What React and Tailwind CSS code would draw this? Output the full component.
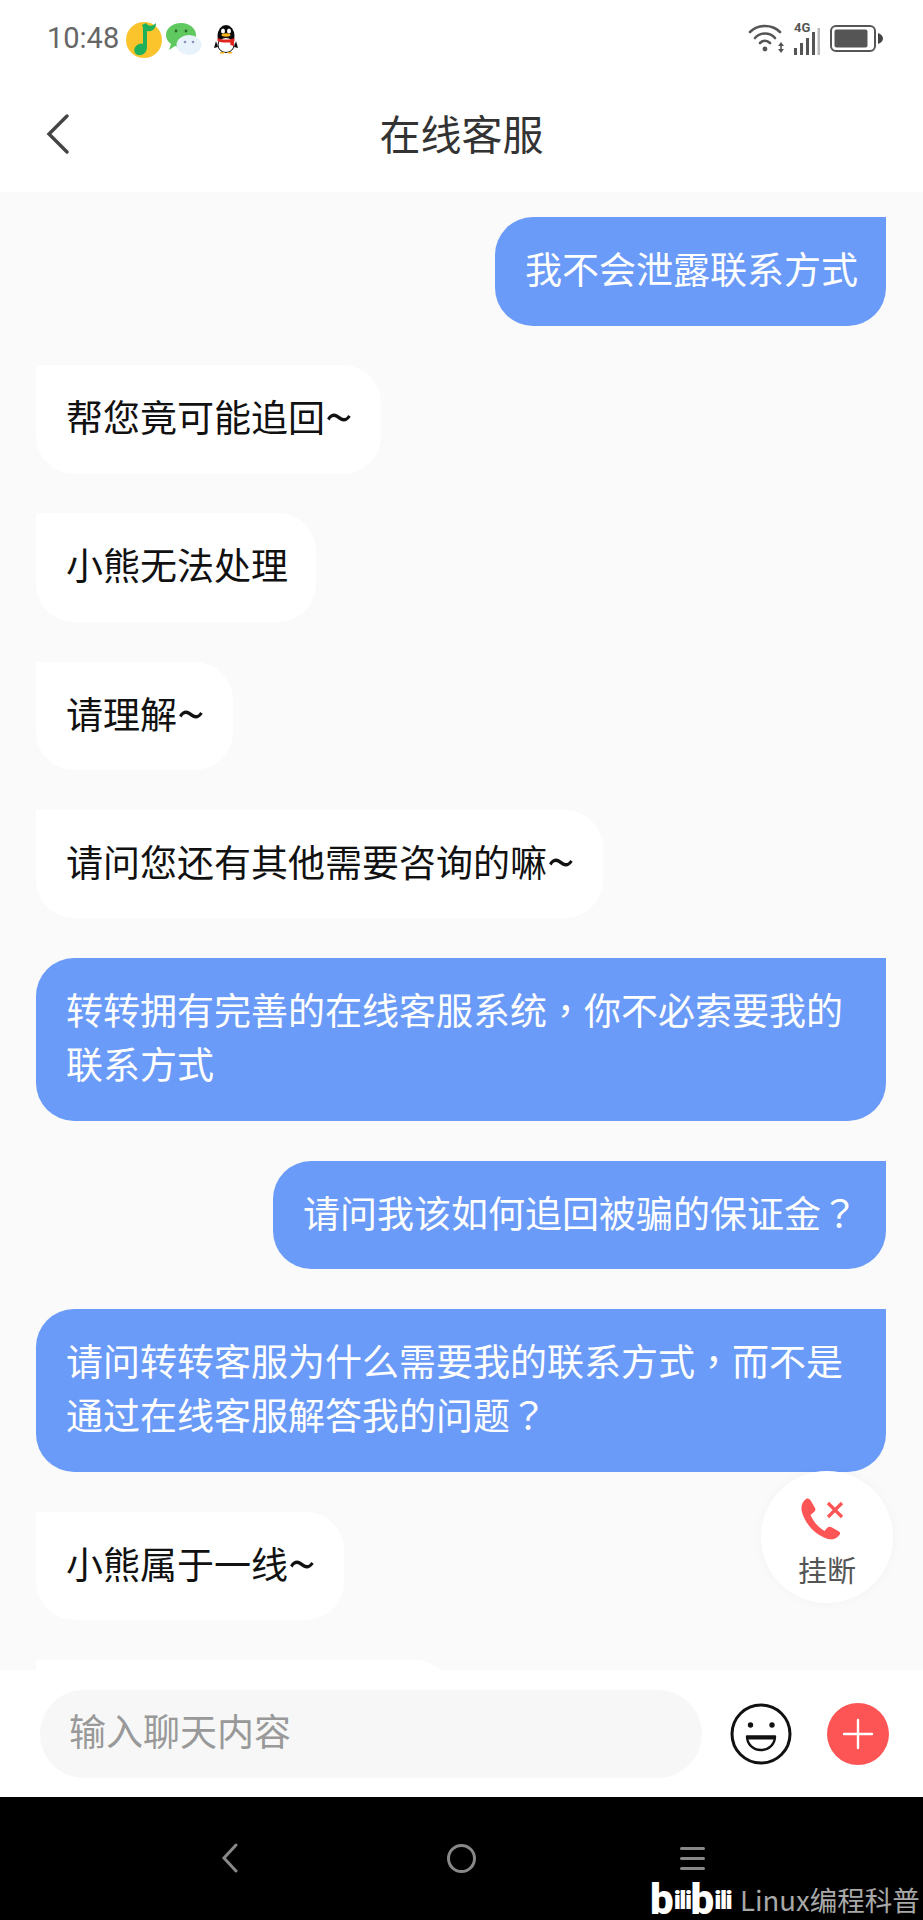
import React from 'react';

const messages = [
    { id: 1, text: '我不会泄露联系方式', mine: true },
    { id: 2, text: '帮您竟可能追回~' },
    { id: 3, text: '小熊无法处理' },
    { id: 4, text: '请理解~' },
    { id: 5, text: '请问您还有其他需要咨询的嘛~' },
    { id: 6, text: '转转拥有完善的在线客服系统，你不必索要我的联系方式', mine: true },
    { id: 7, text: '请问我该如何追回被骗的保证金？', mine: true },
    { id: 8, text: '请问转转客服为什么需要我的联系方式，而不是通过在线客服解答我的问题？', mine: true },
    { id: 9, text: '小熊属于一线~' },
];

const QQMusicIcon = () => (
    <svg width="38" height="38" viewBox="0 0 38 38">
        <circle cx="19" cy="20" r="18" fill="#fbc42c" />
        <path d="M17 5 L21 3 C23 6 27 7 31 3 C31 9 27 12 22 11 L22 27 C22 33 17 36 13 35 C9 34 8 29 11 26 C13 24 16 23 18 24 L18 8 Z" fill="#1eb05a" />
    </svg>
);

const WeChatIcon = () => (
    <svg width="38" height="34" viewBox="0 0 38 34">
        <path d="M16 1 C25 1 31 7 31 13 C31 20 25 25 16 25 C14 25 12 25 10 24 L4 28 L6 22 C3 20 1 17 1 13 C1 7 7 1 16 1 Z" fill="#5fc85f" />
        <circle cx="11" cy="9" r="1.4" fill="#2a6b2a" />
        <circle cx="21" cy="9" r="1.4" fill="#2a6b2a" />
        <ellipse cx="24" cy="23" rx="12.5" ry="10" fill="#e8f2fa" />
        <circle cx="20" cy="20" r="1.3" fill="#8a8fc0" />
        <circle cx="28" cy="20" r="1.3" fill="#8a8fc0" />
    </svg>
);

const QQIcon = () => (
    <svg width="26" height="30" viewBox="0 0 26 30">
        <ellipse cx="13" cy="12" rx="8.5" ry="11" fill="#0a0a0a" />
        <path d="M3 17 L1 24 L5 23 Z M23 17 L25 24 L21 23 Z" fill="#0a0a0a" />
        <ellipse cx="13" cy="21" rx="8" ry="7.5" fill="#fff" stroke="#0a0a0a" strokeWidth="1" />
        <ellipse cx="10" cy="7" rx="2" ry="2.5" fill="#fff" />
        <ellipse cx="16" cy="7" rx="2" ry="2.5" fill="#fff" />
        <ellipse cx="13" cy="11" rx="4.5" ry="1.7" fill="#f5b21c" />
        <path d="M4.5 14 C9 16 17 16 21.5 14 L21.5 17 C17 19 9 19 4.5 17 Z M17 17 L21 17 L21 22 L17.5 21 Z" fill="#e0251f" />
        <path d="M7 28 L12 28 L11 29.5 L7 29.5 Z M14 28 L19 28 L19 29.5 L15 29.5 Z" fill="#f5b21c" />
    </svg>
);

const StatusRight = () => (
    <svg width="136" height="36" viewBox="0 0 136 36" fill="none" className="block">
        {/* wifi */}
        <path d="M2 11 C10 3 24 3 32 11" stroke="#555" strokeWidth="2.6" strokeLinecap="round" />
        <path d="M7 17 C12 11 22 11 27 17" stroke="#555" strokeWidth="2.6" strokeLinecap="round" />
        <path d="M12 22 C15 19 19 19 22 22" stroke="#555" strokeWidth="2.6" strokeLinecap="round" />
        <circle cx="17" cy="28" r="2.4" fill="#555" />
        <path d="M30 25 L33 21 L36 25 Z M30 28 L33 32 L36 28 Z" fill="#555" />
        <rect x="32.2" y="24" width="1.6" height="5" fill="#555" />
        {/* signal */}
        <rect x="46" y="27" width="3" height="7" fill="#555" />
        <rect x="52" y="22" width="3" height="12" fill="#555" />
        <rect x="58" y="17" width="3" height="17" fill="#555" />
        <rect x="64" y="11" width="3" height="23" fill="#555" />
        <rect x="69.5" y="7" width="2.5" height="27" fill="#bbb" />
        <text x="46" y="11" fontSize="13" fontWeight="700" fill="#555" fontFamily="Roboto, sans-serif">4G</text>
        {/* battery */}
        <rect x="83" y="5" width="44" height="25" rx="5" stroke="#555" strokeWidth="2" />
        <rect x="86.5" y="8.5" width="33" height="18" rx="2" fill="#555" />
        <path d="M130 12 C133 13 135 15 135 17.5 C135 20 133 22 130 23 Z" fill="#444" />
    </svg>
);

// the reference centres its full-width punctuation and has a wider tilde
const renderText = (text) =>
    text.split(/([，？~])/).map((part, i) => {
        if (part === '，' || part === '？') {
            return <span key={i} className="font-['Noto_Sans_CJK_TC',sans-serif]">{part}</span>;
        }
        if (part === '~') {
            return <span key={i} className="align-[-4px] text-[50px] leading-none">{part}</span>;
        }
        return part;
    });

const Bubble = ({ text, mine }) => (
    <div
        className={`h-fit w-fit shrink-0 rounded-[38px] pb-[30px] pl-[30px] pr-[28px] pt-[24px] text-[37px] leading-[54.5px] ${
            mine ? 'self-end rounded-tr-none bg-[#6b9bf8] text-white' : 'rounded-tl-none bg-white text-[#111]'
        }`}
    >
        {renderText(text)}
    </div>
);

const BiliLogo = () => (
    <span className="flex w-[83px] items-end whitespace-nowrap font-['Roboto',sans-serif] font-black leading-[34px] text-white">
        <span className="text-[42px]">b</span>
        <span className="text-[26px] tracking-[-1.5px]">ili</span>
        <span className="text-[42px]">b</span>
        <span className="text-[26px] tracking-[-1.5px]">ili</span>
    </span>
);

const App = () => {
    return (
        <div className="relative flex h-[1920px] w-[923px] flex-col overflow-hidden bg-white font-['Noto_Sans_CJK_SC','Noto_Sans',sans-serif]">
            {/* Status bar */}
            <div className="flex h-[72px] shrink-0 items-center justify-between pl-[47px] pr-[39px] pt-[5px]">
                <div className="flex items-center">
                    <span className="font-['Roboto',sans-serif] text-[29px] text-[#666]">10:48</span>
                    <div className="ml-[6px] flex items-center">
                        <QQMusicIcon />
                        <div className="ml-[2px]"><WeChatIcon /></div>
                        <div className="ml-[10px]"><QQIcon /></div>
                    </div>
                </div>
                <StatusRight />
            </div>

            {/* Header */}
            <header className="relative flex h-[120px] shrink-0 items-center justify-center pt-[2px]">
                <svg width="24" height="40" viewBox="0 0 24 40" fill="none" className="absolute left-[46px] top-[42px]">
                    <path d="M21 2 L3 20 L21 38" stroke="#444" strokeWidth="3.4" strokeLinecap="round" strokeLinejoin="miter" />
                </svg>
                <h1 className="text-[41px] font-normal text-[#333]">在线客服</h1>
            </header>

            {/* Chat */}
            <main className="flex min-h-0 flex-1 flex-col gap-[39.7px] overflow-hidden bg-[#fafafa] pl-[36px] pr-[37px] pt-[25px]">
                {messages.map((m) => (
                    <Bubble key={m.id} text={m.text} mine={m.mine} />
                ))}
                <div className="h-[109px] w-[417px] shrink-0 rounded-[38px] rounded-tl-none bg-white" />
            </main>

            {/* Hang up button */}
            <div className="absolute left-[761px] top-[1471px] flex h-[132px] w-[132px] flex-col items-center rounded-full bg-white pt-[27px] shadow-[0_0_12px_rgba(0,0,0,0.03)]">
                <svg width="46" height="44" viewBox="0 0 46 44" className="-ml-[6px]">
                    <path d="M5 1 C7 0 9 1 10 3 L14 10 C15 12 14 13 13 14 L9.5 17 C12 23 17 29 23.5 33 L26 30 C28 28.5 29 28.5 31 29.5 L38 33.5 C39.5 34.5 39.5 36 38 37.5 C35 41 31 42 27 41 C14 37 3 25 0.5 12 C0 7 2 3 5 1 Z" fill="#fd5556" />
                    <path d="M27 5 L41 19 M41 5 L27 19" stroke="#fd5556" strokeWidth="3.2" />
                </svg>
                <span className="mt-[9px] text-[29px] leading-[36px] text-[#555]">挂断</span>
            </div>

            {/* Input bar */}
            <div className="flex h-[127px] shrink-0 items-center pl-[40px] pr-[34px]">
                <div className="flex h-[88px] w-[662px] items-center rounded-full bg-[#f7f7f7] pb-[5px] pl-[29px] text-[37px] text-[#999]">
                    输入聊天内容
                </div>
                <svg width="62" height="62" viewBox="0 0 62 62" fill="none" className="ml-[28px]">
                    <circle cx="31" cy="31" r="29" stroke="#111" strokeWidth="3" />
                    <circle cx="20.5" cy="22" r="2.7" fill="#111" />
                    <circle cx="42" cy="22" r="2.7" fill="#111" />
                    <path d="M17 33.5 H45 C45 41 39 47 31 47 C23 47 17 41 17 33.5 Z" stroke="#111" strokeWidth="2.4" strokeLinejoin="round" />
                    <path d="M17 33 H45 L44 36.5 H18 Z" fill="#111" />
                </svg>
                <div className="ml-[35px] flex h-[62px] w-[62px] items-center justify-center rounded-full bg-[#fd5556]">
                    <svg width="32" height="32" viewBox="0 0 32 32" fill="none">
                        <path d="M16 2 V30 M2 16 H30" stroke="#fff" strokeWidth="2.4" strokeLinecap="round" />
                    </svg>
                </div>
            </div>

            {/* Nav bar */}
            <nav className="relative flex h-[123px] shrink-0 items-start bg-black">
                <svg width="18" height="30" viewBox="0 0 18 30" fill="none" className="absolute left-[221px] top-[46px]">
                    <path d="M15 2 L3 15 L15 28" stroke="#888" strokeWidth="3" strokeLinecap="round" />
                </svg>
                <div className="absolute left-[447px] top-[47px] h-[29px] w-[29px] rounded-full border-[3px] border-[#888]" />
                <div className="absolute left-[680px] top-[50px] flex flex-col gap-[7px]">
                    <div className="h-[3px] w-[25px] rounded-full bg-[#888]" />
                    <div className="h-[3px] w-[25px] rounded-full bg-[#888]" />
                    <div className="h-[3px] w-[25px] rounded-full bg-[#888]" />
                </div>
                {/* watermark */}
                <div className="absolute left-[650px] top-[84px] flex items-end whitespace-nowrap">
                    <BiliLogo />
                    <span className="ml-[7px] text-[27.5px] leading-[36px] text-[#a8a8a8]">Linux编程科普</span>
                </div>
            </nav>
        </div>
    );
};

export default App;
